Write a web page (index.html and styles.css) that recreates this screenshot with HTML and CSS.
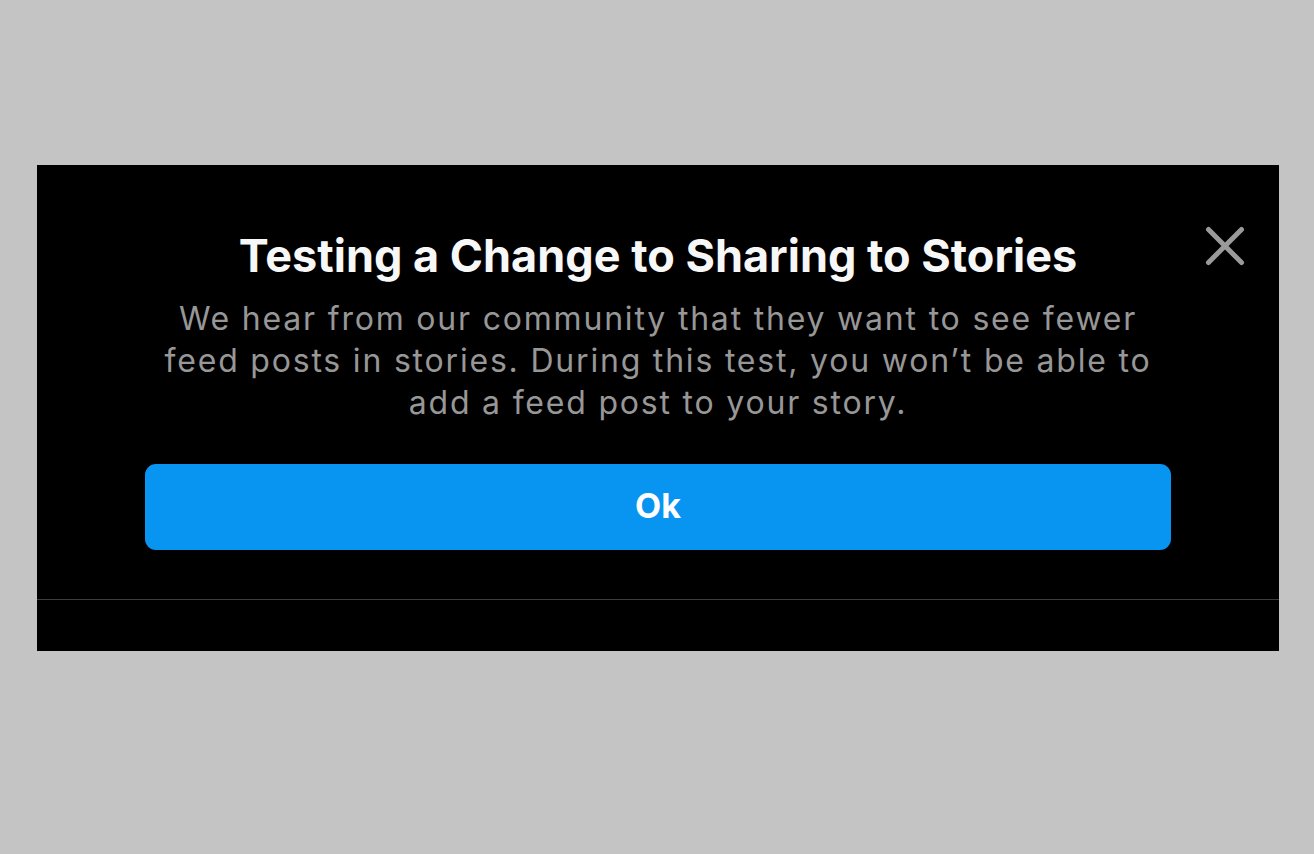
FILE: index.html
```html
<!DOCTYPE html>
<html lang="en">
<head>
<meta charset="utf-8">
<title>Testing a Change to Sharing to Stories</title>
<link rel="stylesheet" href="styles.css">
</head>
<body>
<div class="panel">
  <div class="sheet">
    <button class="close" aria-label="Close">
      <svg width="40" height="40" viewBox="0 0 40 40"><path d="M3.5 3.5 L36.5 36.5 M36.5 3.5 L3.5 36.5" stroke="#9a9a9a" stroke-width="5" stroke-linecap="round" fill="none"/></svg>
    </button>
    <h1 class="title">Testing a Change to Sharing to Stories</h1>
    <p class="body">We hear from our community that they want to see fewer feed posts in stories. During this test, you won’t be able to add a feed post to your story.</p>
    <button class="ok">Ok</button>
  </div>
  <div class="footer"></div>
</div>
</body>
</html>
```
FILE: styles.css
```css
* { box-sizing: border-box; }
html, body { margin: 0; padding: 0; }
body {
  background: #c4c4c4;
  width: 1314px;
  height: 854px;
  padding-top: 165px;
  padding-left: 37px;
  font-family: Inter, "Noto Sans", "Liberation Sans", sans-serif;
}
.panel {
  width: 1242px;
  height: 486px;
  background: #000;
  display: flex;
  flex-direction: column;
}
.sheet {
  position: relative;
  height: 435px;
  border-bottom: 1px solid #3c3c3c;
  display: flex;
  flex-direction: column;
  align-items: center;
  padding-top: 65px;
}
.close {
  position: absolute;
  top: 61px;
  right: 34px;
  width: 40px;
  height: 40px;
  padding: 0;
  border: 0;
  background: none;
}
.close svg { display: block; }
.title {
  margin: 0;
  color: #f7f7f7;
  font-size: 45px;
  line-height: 52px;
  font-weight: 700;
  letter-spacing: 0;
}
.body {
  margin: 16px 0 0;
  max-width: 1000px;
  text-align: center;
  color: #979797;
  font-size: 32px;
  line-height: 42px;
  font-weight: 400;
  letter-spacing: 1.8px;
}
.ok {
  margin-top: 40px;
  width: 1026px;
  height: 86px;
  padding: 0 0 4px;
  border: 0;
  border-radius: 11px;
  background: #0895f1;
  color: #fff;
  font-family: inherit;
  font-size: 34px;
  font-weight: 700;
}
.footer { flex: 1; }
```
